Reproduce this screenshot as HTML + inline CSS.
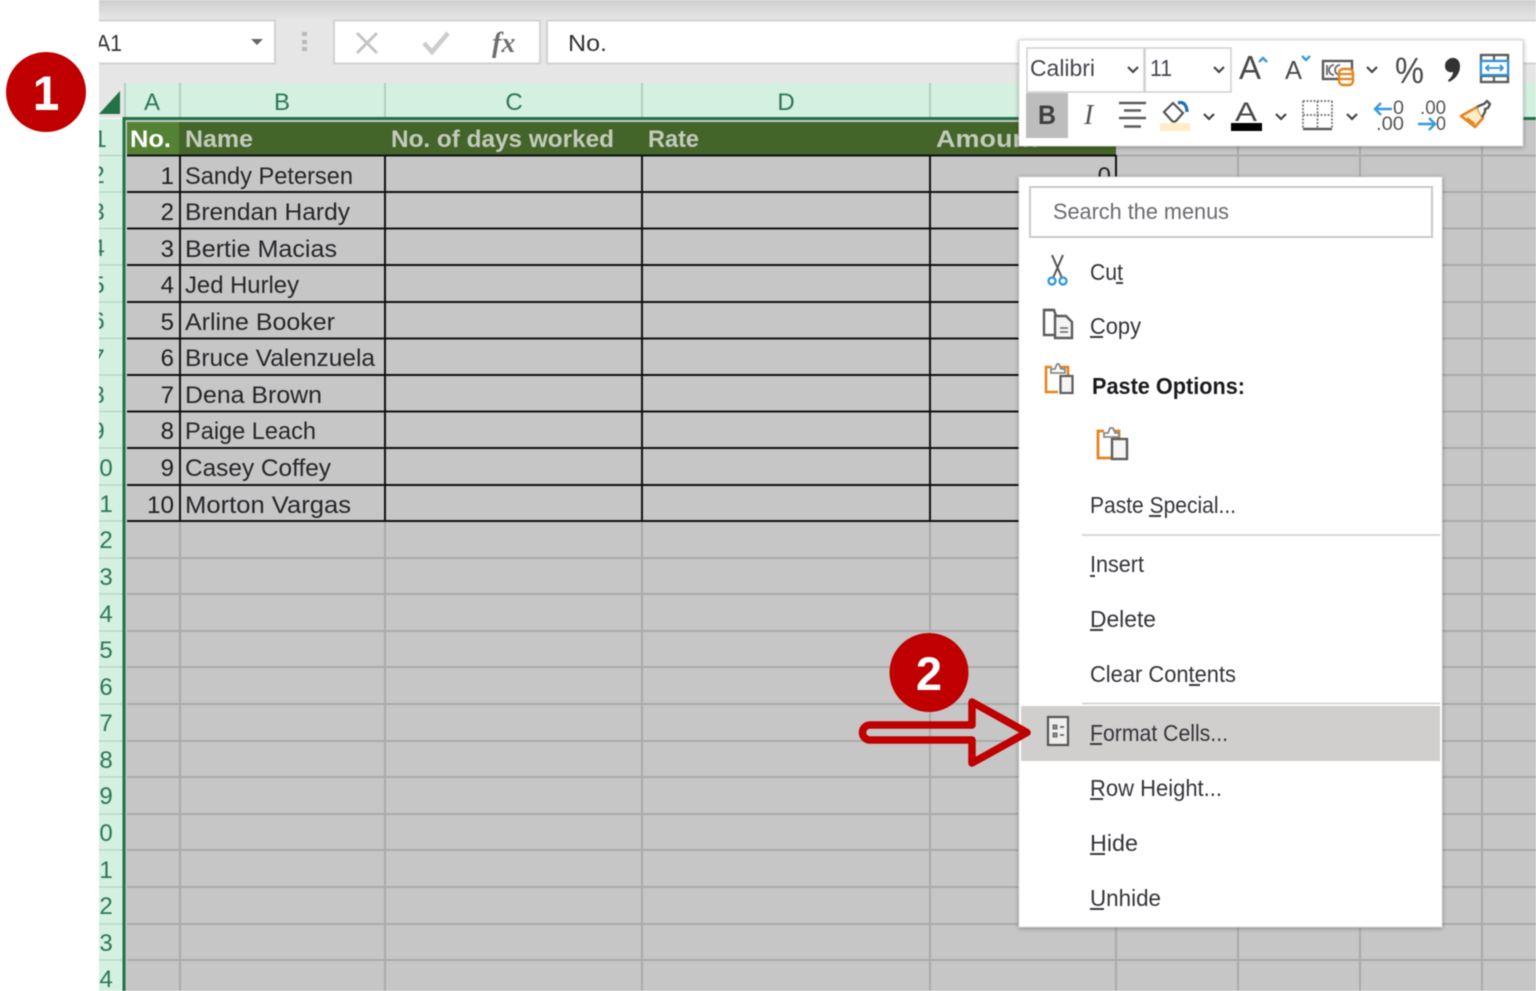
<!DOCTYPE html>
<html><head><meta charset="utf-8"><title>Format Cells</title>
<style>
html,body{margin:0;padding:0;background:#fff;width:1536px;height:991px;overflow:hidden}
svg{display:block;position:absolute;left:0;top:0;filter:blur(.55px)}
text{font-family:"Liberation Sans",sans-serif}
.c{font-size:24px;fill:#26262a}
.h{font-size:24px;font-weight:bold;fill:#c3cbbb}
.n{font-size:24px;fill:#1e1e22;text-anchor:end}
.r{font-size:24px;fill:#2b7757;text-anchor:middle}
.l{font-size:24px;fill:#2b7757;text-anchor:middle}
.m{font-size:23px;fill:#34343a}
.u{stroke:#3a3a3e;stroke-width:2}
.ch{fill:none;stroke:#444;stroke-width:2.2}
</style></head><body>
<svg width="1536" height="991" viewBox="0 0 1536 991" xmlns="http://www.w3.org/2000/svg">
<defs>
<linearGradient id="tg" x1="0" y1="0" x2="0" y2="1"><stop offset="0" stop-color="#cfcfcf"/><stop offset="1" stop-color="#e6e6e6"/></linearGradient>
<clipPath id="cl"><rect x="99" y="0" width="1437" height="991"/></clipPath>
<filter id="sh" x="-5%" y="-5%" width="110%" height="110%"><feDropShadow dx="0" dy="1" stdDeviation="2.5" flood-color="#000" flood-opacity=".3"/></filter>
</defs>
<rect width="1536" height="991" fill="#fff"/>
<!-- top chrome -->
<rect x="99" y="0" width="1437" height="83" fill="#e6e6e6"/>
<rect x="99" y="0" width="1437" height="20" fill="url(#tg)"/>
<g clip-path="url(#cl)">
<rect x="90" y="20.5" width="185" height="43" fill="#fff" stroke="#d2d2d2" stroke-width="2"/>
<text x="96" y="51" font-size="23" fill="#333" textLength="26" lengthAdjust="spacingAndGlyphs">A1</text>
</g>
<rect x="334" y="20.5" width="206" height="43" fill="#fff" stroke="#d2d2d2" stroke-width="2"/>
<rect x="547" y="20.5" width="1000" height="43" fill="#fff" stroke="#d2d2d2" stroke-width="2"/>
<path d="M251 39h12l-6 6z" fill="#666"/>
<g fill="#b8b8b8"><rect x="302" y="32" width="5" height="4"/><rect x="302" y="40" width="5" height="4"/><rect x="302" y="47" width="5" height="4"/></g>
<path d="M357 33l20 20M377 33l-20 20" stroke="#c4c4c4" stroke-width="3" fill="none"/>
<path d="M424 43l8 9 16-19" stroke="#cdcdcd" stroke-width="4.5" fill="none"/>
<text x="492" y="52" font-size="28" font-style="italic" font-weight="bold" fill="#6e6e6e" style="font-family:'Liberation Serif',serif">fx</text>
<text x="568" y="51" font-size="23" fill="#333" textLength="39" lengthAdjust="spacingAndGlyphs">No.</text>
<!-- col headers -->
<rect x="99" y="83" width="26" height="35" fill="#e6e6e6"/>
<path d="M99 114L120 91V114Z" fill="#217346"/>
<rect x="125" y="83" width="1411" height="35" fill="#d4f0e0"/>
<g stroke="#b3cfc1" stroke-width="2"><path d="M125 83v35M180 83v35M385 83v35M642 83v35M930 83v35"/></g>
<text class="l" x="152" y="110">A</text><text class="l" x="282" y="110">B</text><text class="l" x="514" y="110">C</text><text class="l" x="786" y="110">D</text>
<!-- row headers -->
<rect x="99" y="119" width="25" height="872" fill="#d4f0e0"/>
<g stroke="#b9d6c7" stroke-width="1.5"><path d="M99 155.5h24M99 192h24M99 228.5h24M99 265h24M99 302h24M99 338.5h24M99 375h24M99 411.5h24M99 448h24M99 485h24M99 521h24M99 558h24M99 594h24M99 631h24M99 667h24M99 704h24M99 741h24M99 777h24M99 814h24M99 850h24M99 887h24M99 924h24M99 960h24"/></g>
<g clip-path="url(#cl)">
<text class="r" x="100" y="147">1</text><text class="r" x="98" y="183">2</text><text class="r" x="98" y="220">3</text><text class="r" x="98" y="256">4</text><text class="r" x="98" y="293">5</text><text class="r" x="98" y="329">6</text><text class="r" x="98" y="366">7</text><text class="r" x="98" y="403">8</text><text class="r" x="98" y="439">9</text>
<text class="r" x="106" y="476">0</text><text class="r" x="106" y="512">1</text><text class="r" x="106" y="548">2</text><text class="r" x="106" y="585">3</text><text class="r" x="106" y="622">4</text><text class="r" x="106" y="658">5</text><text class="r" x="106" y="695">6</text><text class="r" x="106" y="731">7</text><text class="r" x="106" y="768">8</text><text class="r" x="106" y="804">9</text><text class="r" x="106" y="841">0</text><text class="r" x="106" y="878">1</text><text class="r" x="106" y="914">2</text><text class="r" x="106" y="951">3</text><text class="r" x="106" y="987">4</text>
</g>
<!-- grid -->
<rect x="125" y="119" width="1411" height="872" fill="#c6c6c6"/>
<g stroke="#ababab" stroke-width="2">
<path d="M127 558h1409M127 594h1409M127 631h1409M127 667h1409M127 704h1409M127 741h1409M127 777h1409M127 814h1409M127 850h1409M127 887h1409M127 924h1409M127 960h1409"/>
<path d="M1116 155.5h420M1116 192h420M1116 228.5h420M1116 265h420M1116 302h420M1116 338.5h420M1116 375h420M1116 411.5h420M1116 448h420M1116 485h420M1116 521h420"/>
<path d="M180 521v470M385 521v470M642 521v470M930 521v470M1116 192v799M1238 119v872M1360 119v872M1482 119v872"/>
</g>
<!-- table -->
<rect x="127" y="122" width="989" height="33" fill="#44652a"/>
<rect x="127" y="122" width="52" height="33" fill="#548235"/>
<g stroke="#111" stroke-width="2">
<path d="M127 155.5h989M127 192h989M127 228.5h989M127 265h989M127 302h989M127 338.5h989M127 375h989M127 411.5h989M127 448h989M127 485h989M127 521h989"/>
<path d="M180 155v366M385 155v366M642 155v366M930 155v366M1116 155v366"/>
</g>
<path d="M124 117v874" stroke="#217346" stroke-width="3"/>
<path d="M123 118.5h1413" stroke="#217346" stroke-width="3"/>
<text x="130" y="147" font-size="24" font-weight="bold" fill="#fff" textLength="41" lengthAdjust="spacingAndGlyphs">No.</text>
<text class="h" x="185" y="147" textLength="68" lengthAdjust="spacingAndGlyphs">Name</text>
<text class="h" x="391" y="147" textLength="223" lengthAdjust="spacingAndGlyphs">No. of days worked</text>
<text class="h" x="648" y="147" textLength="51" lengthAdjust="spacingAndGlyphs">Rate</text>
<text class="h" x="936" y="147" textLength="102" lengthAdjust="spacingAndGlyphs">Amount</text>
<text class="n" x="174" y="184">1</text><text class="n" x="174" y="220">2</text><text class="n" x="174" y="257">3</text><text class="n" x="174" y="293">4</text><text class="n" x="174" y="330">5</text><text class="n" x="174" y="366">6</text><text class="n" x="174" y="403">7</text><text class="n" x="174" y="439">8</text><text class="n" x="174" y="476">9</text>
<text x="147" y="513" font-size="24" fill="#1e1e22" textLength="27" lengthAdjust="spacingAndGlyphs">10</text>
<text class="n" x="1111" y="184">0</text>
<text class="c" x="185" y="184" textLength="168" lengthAdjust="spacingAndGlyphs">Sandy Petersen</text>
<text class="c" x="185" y="220" textLength="165" lengthAdjust="spacingAndGlyphs">Brendan Hardy</text>
<text class="c" x="185" y="257" textLength="152" lengthAdjust="spacingAndGlyphs">Bertie Macias</text>
<text class="c" x="185" y="293" textLength="114" lengthAdjust="spacingAndGlyphs">Jed Hurley</text>
<text class="c" x="185" y="330" textLength="150" lengthAdjust="spacingAndGlyphs">Arline Booker</text>
<text class="c" x="185" y="366" textLength="190" lengthAdjust="spacingAndGlyphs">Bruce Valenzuela</text>
<text class="c" x="185" y="403" textLength="137" lengthAdjust="spacingAndGlyphs">Dena Brown</text>
<text class="c" x="185" y="439" textLength="131" lengthAdjust="spacingAndGlyphs">Paige Leach</text>
<text class="c" x="185" y="476" textLength="146" lengthAdjust="spacingAndGlyphs">Casey Coffey</text>
<text class="c" x="185" y="513" textLength="166" lengthAdjust="spacingAndGlyphs">Morton Vargas</text>
<!-- mini toolbar -->
<rect x="1019" y="40" width="504" height="106" fill="#fff" stroke="#d8d8d8" filter="url(#sh)"/>
<rect x="1027" y="48" width="117" height="44" fill="#fff" stroke="#cfcfcf" stroke-width="1.5"/>
<rect x="1145" y="48" width="86" height="44" fill="#fff" stroke="#cfcfcf" stroke-width="1.5"/>
<text x="1030" y="76" font-size="23" fill="#454550" textLength="65" lengthAdjust="spacingAndGlyphs">Calibri</text>
<text x="1150" y="76" font-size="23" fill="#454550" textLength="22" lengthAdjust="spacingAndGlyphs">11</text>
<path class="ch" d="M1128 67l5 5 5-5M1214 67l5 5 5-5M1367 67l5 5 5-5M1204 114l5 5 5-5M1276 114l5 5 5-5M1347 114l5 5 5-5"/>
<text x="1239" y="79" font-size="33" fill="#4a4a4a" textLength="22" lengthAdjust="spacingAndGlyphs">A</text>
<path d="M1259 62l4-4 4 4" fill="none" stroke="#3a9ad9" stroke-width="2.4"/>
<text x="1285" y="79" font-size="26" fill="#4a4a4a" textLength="17" lengthAdjust="spacingAndGlyphs">A</text>
<path d="M1302 56l4 4 4-4" fill="none" stroke="#3a9ad9" stroke-width="2.4"/>
<!-- currency -->
<rect x="1323" y="61" width="29" height="18" fill="#fff" stroke="#5a5a5a" stroke-width="2.4"/>
<path d="M1334 65a5 5 0 0 0 0 10M1340 65a5 5 0 0 0 0 10M1327 65v10" fill="none" stroke="#6a6a6a" stroke-width="1.8"/>
<rect x="1339" y="69" width="14" height="16" rx="4" fill="#fff" stroke="#e5841f" stroke-width="2.4"/>
<path d="M1339 74h14M1339 79h14" stroke="#e5841f" stroke-width="2.2"/>
<!-- percent -->
<text x="1395" y="83" font-size="36" fill="#4a4a4a" textLength="29" lengthAdjust="spacingAndGlyphs">%</text>
<!-- comma -->
<path d="M1449 59c5-3 11 0 11 7 0 8-5 13-11 16l-1-2c3-2 5-5 5-8-4 1-8-1-8-6 0-3 1-5 4-7z" fill="#333"/>
<!-- merge -->
<rect x="1481" y="55" width="27" height="27" fill="#fff" stroke="#5c5c5c" stroke-width="2.4"/>
<path d="M1481 61h27M1481 76h27M1494 55v6M1494 76v6" stroke="#5c5c5c" stroke-width="2.2"/>
<rect x="1481" y="61" width="27" height="14" fill="#fff" stroke="#2f94d8" stroke-width="2.2"/>
<path d="M1486 68h17M1489 65l-3 3 3 3M1500 65l3 3-3 3" fill="none" stroke="#2f94d8" stroke-width="1.8"/>
<!-- row 2 -->
<rect x="1026" y="93" width="42" height="45" fill="#bdbdbd"/>
<text x="1038" y="124" font-size="27" font-weight="bold" fill="#3f3f3f" textLength="18" lengthAdjust="spacingAndGlyphs">B</text>
<text x="1084" y="124" font-size="28" font-style="italic" fill="#555" style="font-family:'Liberation Serif',serif">I</text>
<path d="M1119 103h27M1124 110.500h17M1119 118h27M1124 126.500h17" stroke="#5c5c5c" stroke-width="2.6"/>
<path d="M1164 112l9-9 10 10-7 8c-2 1-3 1-4 0z" fill="#fff" stroke="#555" stroke-width="2.2"/>
<path d="M1178 103c6-2 9 3 9 9" fill="none" stroke="#1f6fb5" stroke-width="3.2"/>
<rect x="1160" y="123" width="30" height="8" fill="#fdeec9"/>
<text x="1235" y="121" font-size="27" fill="#4a4a4a" textLength="22" lengthAdjust="spacingAndGlyphs">A</text>
<rect x="1231" y="123" width="31" height="8" fill="#000"/>
<!-- borders -->
<path d="M1303 101h29M1303 101v28M1332 101v28M1317.500 101v28M1303 115h29" fill="none" stroke="#777" stroke-width="1.8" stroke-dasharray="2 1.500"/>
<path d="M1303 129h29" stroke="#5c5c5c" stroke-width="2.6"/>
<!-- decimals -->
<path d="M1392 109h-17M1381 103l-6 6 6 6" fill="none" stroke="#3a9ad9" stroke-width="2.4"/>
<text x="1393" y="114" font-size="19" fill="#555" textLength="11" lengthAdjust="spacingAndGlyphs">0</text>
<text x="1376" y="130" font-size="19" fill="#555" textLength="28" lengthAdjust="spacingAndGlyphs">.00</text>
<text x="1420" y="114" font-size="19" fill="#555" textLength="26" lengthAdjust="spacingAndGlyphs">.00</text>
<path d="M1418 124h17M1429 118l6 6-6 6" fill="none" stroke="#3a9ad9" stroke-width="2.4"/>
<text x="1436" y="130" font-size="19" fill="#555" textLength="10" lengthAdjust="spacingAndGlyphs">0</text>
<!-- brush -->
<path d="M1461 116l16-9 6 11-8 9z" fill="#fdeec9" stroke="#e5841f" stroke-width="2.6" stroke-linejoin="round"/>
<path d="M1467 118l8 6" stroke="#e5841f" stroke-width="2"/>
<path d="M1477 107l4-2 3-1 3-3 3 3-2 4-3 1 0 3-3 5" fill="#fff" stroke="#555" stroke-width="2.4" stroke-linejoin="round"/>
<!-- context menu -->
<rect x="1019" y="177" width="423" height="750" fill="#fff" stroke="#dcdcdc" filter="url(#sh)"/>
<rect x="1030" y="187" width="402" height="50" fill="#fff" stroke="#c9c9c9" stroke-width="2"/>
<text x="1053" y="219" font-size="22" fill="#6b6b70" textLength="176" lengthAdjust="spacingAndGlyphs">Search the menus</text>
<rect x="1021" y="706" width="419" height="55" fill="#d0cfcd"/>
<path d="M1082 535h358M1082 703.500h358" stroke="#d8d8d8" stroke-width="2"/>
<text class="m" x="1090" y="280" textLength="33" lengthAdjust="spacingAndGlyphs">Cut</text>
<text class="m" x="1090" y="334" textLength="51" lengthAdjust="spacingAndGlyphs">Copy</text>
<text x="1092" y="394" font-size="23" font-weight="bold" fill="#1a1a1e" textLength="153" lengthAdjust="spacingAndGlyphs">Paste Options:</text>
<text class="m" x="1090" y="513" textLength="146" lengthAdjust="spacingAndGlyphs">Paste Special...</text>
<text class="m" x="1090" y="572" textLength="54" lengthAdjust="spacingAndGlyphs">Insert</text>
<text class="m" x="1090" y="627" textLength="66" lengthAdjust="spacingAndGlyphs">Delete</text>
<text class="m" x="1090" y="682" textLength="146" lengthAdjust="spacingAndGlyphs">Clear Contents</text>
<text class="m" x="1090" y="741" textLength="138" lengthAdjust="spacingAndGlyphs">Format Cells...</text>
<text class="m" x="1090" y="796" textLength="132" lengthAdjust="spacingAndGlyphs">Row Height...</text>
<text class="m" x="1090" y="851" textLength="48" lengthAdjust="spacingAndGlyphs">Hide</text>
<text class="m" x="1090" y="906" textLength="71" lengthAdjust="spacingAndGlyphs">Unhide</text>
<path class="u" d="M1116 283h7M1090 337h13M1149 516h12M1090 576h5M1090 630h13M1189 685h11M1090 744h12M1090 799h13M1090 854h15M1090 909h14"/>
<!-- scissors -->
<path d="M1052 255l10 23M1063 255l-10 23" fill="none" stroke="#555" stroke-width="2"/>
<circle cx="1052" cy="281" r="3.500" fill="none" stroke="#3a9ad9" stroke-width="2.4"/>
<circle cx="1063" cy="281" r="3.500" fill="none" stroke="#3a9ad9" stroke-width="2.4"/>
<!-- copy -->
<path d="M1055 310h-11v25h10" fill="none" stroke="#5c5c5c" stroke-width="2.4"/>
<path d="M1044 310h10l2 6" fill="none" stroke="#5c5c5c" stroke-width="2.4"/>
<path d="M1055 316h11l6 6v16h-17z" fill="#f4f4f4" stroke="#5c5c5c" stroke-width="2.4"/>
<path d="M1060 328h8M1060 332h8" stroke="#666" stroke-width="1.6"/>
<!-- paste small -->
<path d="M1059 367h9v8M1058 392h-12v-25h6" fill="none" stroke="#e5841f" stroke-width="2.6"/>
<path d="M1051 369h4l2-5 2 0 2 5h4v4h-14z" fill="#fff" stroke="#888" stroke-width="1.8"/>
<rect x="1060.500" y="376" width="12" height="17" fill="#f4f4f4" stroke="#5c5c5c" stroke-width="2.2"/>
<!-- paste big -->
<path d="M1113 431h6v8M1111 458h-13v-27h6" fill="none" stroke="#e5841f" stroke-width="2.8"/>
<path d="M1104 433h4l2-5 3 0 2 5h4v4h-15z" fill="#fff" stroke="#888" stroke-width="1.8"/>
<rect x="1112" y="439" width="15" height="20" fill="#f6f6f6" stroke="#5c5c5c" stroke-width="2.4"/>
<!-- format cells -->
<rect x="1048" y="717" width="20" height="28" fill="#eee" stroke="#555" stroke-width="2.2"/>
<path d="M1053 725h4v4h-4zM1053 733h4v4h-4z" fill="#8a8a8a" stroke="#666"/>
<path d="M1060 727h4M1060 735h4" stroke="#666" stroke-width="1.8"/>
<!-- annotations -->
<circle cx="46" cy="92" r="40" fill="#c00000"/>
<text x="46" y="109" font-size="47" font-weight="bold" fill="#fff" text-anchor="middle">1</text>
<rect x="36" y="104" width="22" height="6" fill="#fff"/>
<circle cx="929" cy="672.500" r="39.500" fill="#c00000"/>
<text x="929" y="690" font-size="47" font-weight="bold" fill="#fff" text-anchor="middle">2</text>
<path d="M972 725V702L1027 732.500 972 763V740H870a7.500 7.500 0 0 1 0-15z" fill="none" stroke="#c00000" stroke-width="7.500" stroke-linejoin="round"/>
</svg>
</body></html>
